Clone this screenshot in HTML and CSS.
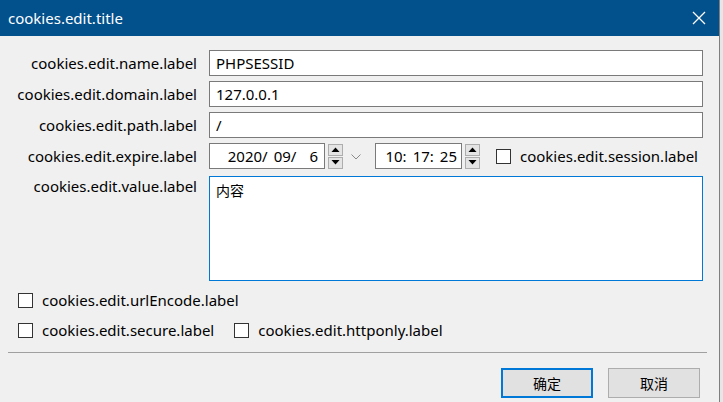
FILE: index.html
```html
<!DOCTYPE html>
<html>
<head>
<meta charset="utf-8">
<link rel="stylesheet" href="styles.css">
</head>
<body>
<div class="window">
  <div class="titlebar">
    <span class="title">cookies.edit.title</span>
    <svg class="close" width="14" height="14" viewBox="0 0 14 14"><path d="M1 1 L13 13 M13 1 L1 13" stroke="#fff" stroke-width="1.3" fill="none"/></svg>
  </div>
  <div class="content">
    <div class="form">
      <label class="lbl">cookies.edit.name.label</label>
      <div class="input">PHPSESSID</div>
      <label class="lbl">cookies.edit.domain.label</label>
      <div class="input">127.0.0.1</div>
      <label class="lbl">cookies.edit.path.label</label>
      <div class="input">/</div>
      <label class="lbl">cookies.edit.expire.label</label>
      <div class="expire">
        <div class="box date"><span>2020/</span><span class="dy">09/</span><span class="dd">6</span></div>
        <div class="spin">
          <div class="spinbtn"><svg width="9" height="5" viewBox="0 0 9 5"><path d="M0.5 5 L4.5 0.5 L8.5 5 Z" fill="#000"/></svg></div>
          <div class="spinbtn"><svg width="9" height="5" viewBox="0 0 9 5"><path d="M0.5 0 L4.5 4.5 L8.5 0 Z" fill="#000"/></svg></div>
        </div>
        <svg class="chev" width="10" height="6" viewBox="0 0 10 6"><path d="M0.5 0.5 L5 5 L9.5 0.5" stroke="#8a8a8a" stroke-width="1" fill="none"/></svg>
        <div class="box time"><span>10:</span><span class="ts">17:</span><span class="ts">25</span></div>
        <div class="spin">
          <div class="spinbtn"><svg width="9" height="5" viewBox="0 0 9 5"><path d="M0.5 5 L4.5 0.5 L8.5 5 Z" fill="#000"/></svg></div>
          <div class="spinbtn"><svg width="9" height="5" viewBox="0 0 9 5"><path d="M0.5 0 L4.5 4.5 L8.5 0 Z" fill="#000"/></svg></div>
        </div>
        <div class="check session"><span class="cb"></span><span>cookies.edit.session.label</span></div>
      </div>
      <label class="lbl top">cookies.edit.value.label</label>
      <div class="textarea">内容</div>
    </div>
    <div class="checks">
      <div class="check"><span class="cb"></span><span>cookies.edit.urlEncode.label</span></div>
      <div class="checkrow">
        <div class="check"><span class="cb"></span><span>cookies.edit.secure.label</span></div>
        <div class="check"><span class="cb"></span><span>cookies.edit.httponly.label</span></div>
      </div>
    </div>
    <div class="sep"></div>
    <div class="buttons">
      <div class="btn ok">确定</div>
      <div class="btn">取消</div>
    </div>
  </div>
</div>
</body>
</html>
```
FILE: styles.css
```css
html, body {
  margin: 0;
  padding: 0;
  background: #e6e6e6;
}
body {
  font-family: "Noto Sans", "Noto Sans CJK SC", sans-serif;
  font-size: 15px;
  color: #000;
}
.window {
  width: 720px;
  height: 402px;
  background: #f0f0f0;
  border-right: 1px solid #7f7f7f;
  box-sizing: border-box;
  overflow: hidden;
}
.titlebar {
  height: 36px;
  background: #02508c;
  color: #fff;
  display: flex;
  align-items: center;
  justify-content: space-between;
  padding: 0 13px 0 8px;
}
.title {
  font-size: 15px;
  margin-top: -1px;
}
.close {
  margin-top: -1px;
}
.content {
  padding-top: 14px;
}
.form {
  display: grid;
  grid-template-columns: 197px 494px;
  column-gap: 12px;
  row-gap: 5px;
  grid-auto-rows: auto;
}
.lbl {
  text-align: right;
  line-height: 26px;
  white-space: nowrap;
}
.lbl.top {
  line-height: 20px;
  padding-top: 1px;
  margin-top: 1px;
}
.input {
  height: 26px;
  box-sizing: border-box;
  border: 1px solid #7a7a7a;
  background: #fff;
  padding: 0 6px;
  line-height: 24px;
  white-space: nowrap;
}
.expire {
  display: flex;
  align-items: center;
  height: 26px;
}
.box {
  height: 26px;
  box-sizing: border-box;
  border: 1px solid #7a7a7a;
  background: #fff;
  line-height: 24px;
  white-space: nowrap;
  display: flex;
  justify-content: flex-end;
}
.date {
  width: 116px;
  padding-right: 6px;
}
.dy {
  margin-left: 6px;
}
.dd {
  margin-left: 13px;
}
.time {
  width: 87px;
  padding-right: 4px;
}
.ts {
  margin-left: 6px;
}
.spin {
  display: flex;
  flex-direction: column;
  gap: 1px;
  margin-left: 3px;
  width: 15px;
}
.spinbtn {
  height: 12px;
  box-sizing: border-box;
  border: 1px solid #adadad;
  background: #e4e4e4;
  display: flex;
  align-items: center;
  justify-content: center;
}
.chev {
  margin: 2px 14px 0 8px;
}
.check {
  display: flex;
  align-items: center;
  white-space: nowrap;
}
.cb {
  width: 15px;
  height: 15px;
  box-sizing: border-box;
  border: 1px solid #333;
  background: #fff;
  margin-right: 9px;
}
.session {
  margin-left: 16px;
}
.textarea {
  margin-top: 2px;
  height: 105px;
  box-sizing: border-box;
  border: 1px solid #0078d7;
  background: #fff;
  padding: 3px 6px;
  line-height: 20px;
  font-family: "Noto Sans CJK SC", sans-serif;
  font-size: 14px;
}
.checks {
  padding-left: 18px;
  margin-top: 8px;
  display: flex;
  flex-direction: column;
  gap: 8px;
}
.checks .check {
  height: 22px;
}
.checkrow {
  display: flex;
  gap: 20px;
}
.sep {
  margin: 11px 12px 0 8px;
  height: 1px;
  background: #a0a0a0;
}
.buttons {
  display: flex;
  justify-content: flex-end;
  gap: 15px;
  padding-right: 19px;
  margin-top: 15px;
}
.btn {
  width: 92px;
  height: 30px;
  box-sizing: border-box;
  border: 1px solid #adadad;
  background: #e1e1e1;
  display: flex;
  align-items: center;
  justify-content: center;
  font-family: "Noto Sans CJK SC", sans-serif;
  font-size: 14px;
}
.btn.ok {
  border: 2px solid #0078d7;
}
```
